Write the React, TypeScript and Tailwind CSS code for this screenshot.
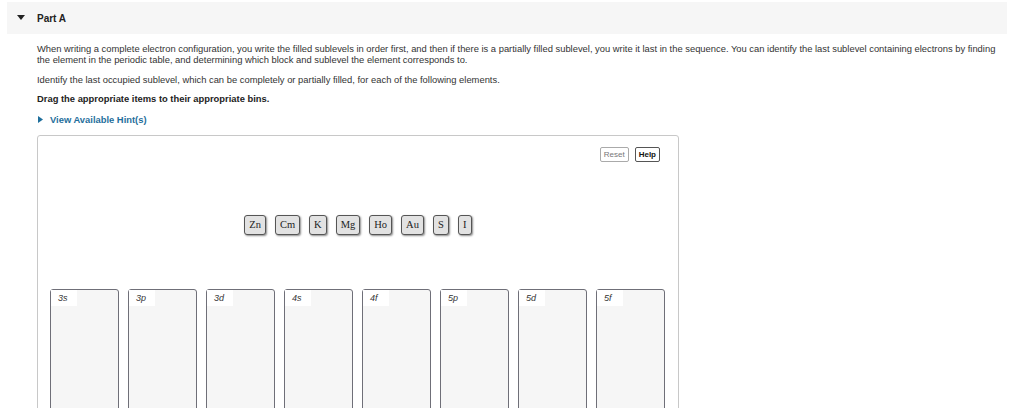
import React from "react";

const elements = ["Zn", "Cm", "K", "Mg", "Ho", "Au", "S", "I"];
const bins = ["3s", "3p", "3d", "4s", "4f", "5p", "5d", "5f"];

export default function App() {
  return (
    <div className="w-[1024px] h-[408px] overflow-hidden bg-white text-[#222] font-['Liberation_Sans',Arial,sans-serif]">
      <div className="ml-[7px] mt-[2px] w-[1000px] h-[32px] bg-[#f6f6f6] flex items-center">
        <svg width="8" height="6" viewBox="0 0 8 6" className="ml-[10px]">
          <path d="M0 0 L8 0 L4 5 Z" fill="#222" />
        </svg>
        <span className="ml-[12px] text-[10px] font-bold">Part A</span>
      </div>

      <div className="pl-[37px] pr-[24px]">
        <p className="mt-[9px] text-[9.4px] leading-[11px] text-[#333]">
          When writing a complete electron configuration, you write the filled sublevels in order first, and then if there is a partially filled sublevel, you write it last in the sequence. You can identify the last sublevel containing electrons by finding the element in the periodic table, and determining which block and sublevel the element corresponds to.
        </p>
        <p className="mt-[9px] text-[9.4px] leading-[11px] text-[#333]">
          Identify the last occupied sublevel, which can be completely or partially filled, for each of the following elements.
        </p>
        <p className="mt-[8px] text-[9.4px] leading-[11px] font-bold text-[#222]">
          Drag the appropriate items to their appropriate bins.
        </p>
        <div className="mt-[10px] flex items-center text-[9.4px] leading-[11px] font-bold text-[#1f6f9c]">
          <svg width="5" height="7" viewBox="0 0 5 7" className="ml-[1px]">
            <path d="M0 0 L5 3.5 L0 7 Z" fill="#1f6f9c" />
          </svg>
          <span className="ml-[7px]">View Available Hint(s)</span>
        </div>

        <div className="mt-[10px] w-[642px] h-[300px] border border-[#c8c8c8] rounded-t-[3px] flex flex-col">
          <div className="flex justify-end gap-[6px] pr-[18px] pt-[11px]">
            <button className="h-[15px] px-[3px] text-[8px] leading-[13px] text-[#777] border border-[#aaa] rounded-[2px] bg-white">
              Reset
            </button>
            <button className="h-[15px] px-[3px] text-[8px] leading-[13px] font-bold text-[#111] border border-[#555] rounded-[2px] bg-white">
              Help
            </button>
          </div>

          <div className="mt-[53px] flex justify-center gap-[9px]">
            {elements.map((e) => (
              <div
                key={e}
                className="h-[20px] px-[4px] min-w-[14px] flex items-center justify-center bg-[#e2e2e2] border border-[#555] rounded-[3px] shadow-[1px_1px_2px_rgba(0,0,0,0.45)] text-[10.5px] text-[#222] font-['Liberation_Serif','Times_New_Roman',serif]"
              >
                {e}
              </div>
            ))}
          </div>

          <div className="mt-[54px] ml-[12px] flex gap-[9px]">
            {bins.map((b) => (
              <div
                key={b}
                className="w-[69px] h-[140px] bg-[#f6f6f6] border border-[#6f6f78] rounded-t-[3px]"
              >
                <div className="w-[26px] h-[16px] bg-white pl-[7px] text-[9px] leading-[16px] italic text-[#333]">
                  {b}
                </div>
              </div>
            ))}
          </div>
        </div>
      </div>
    </div>
  );
}
